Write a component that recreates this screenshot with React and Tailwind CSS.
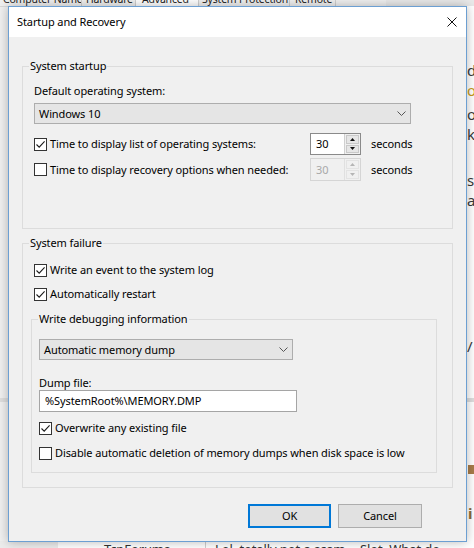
import React from "react";

function Check({ checked }) {
  return (
    <span className="flex h-[13px] w-[13px] shrink-0 items-center justify-center border border-[#333333] bg-white">
      {checked && (
        <svg width="11" height="11" viewBox="0 0 11 11">
          <path d="M1.5 5.5 L4.2 8.2 L9.6 2.4" fill="none" stroke="#1a1a1a" strokeWidth="1.1" />
        </svg>
      )}
    </span>
  );
}

function CheckRow({ checked, children, className = "" }) {
  return (
    <div className={`flex h-[16px] items-center gap-[3px] leading-[16px] ${className}`}>
      <Check checked={checked} />
      <span className="whitespace-nowrap">{children}</span>
    </div>
  );
}

function Chevron() {
  return (
    <svg width="9" height="5" viewBox="0 0 9 5">
      <path d="M0.5 0.5 L4.5 4.5 L8.5 0.5" fill="none" stroke="#555555" strokeWidth="1" />
    </svg>
  );
}

function Combo({ children, className = "" }) {
  return (
    <div className={`flex h-[21px] items-center justify-between border border-[#adadad] bg-[#e5e5e5] pl-[4px] pr-[4px] leading-[16px] ${className}`}>
      <span className="whitespace-nowrap">{children}</span>
      <Chevron />
    </div>
  );
}

function Arrow({ up, disabled }) {
  const c = disabled ? "#b5b5b5" : "#111111";
  return (
    <svg width="5" height="3" viewBox="0 0 5 3">
      {up ? <path d="M0 3 L2.5 0 L5 3 Z" fill={c} /> : <path d="M0 0 L2.5 3 L5 0 Z" fill={c} />}
    </svg>
  );
}

function Spin({ disabled }) {
  return (
    <div
      className={`flex h-full w-[51px] border ${
        disabled ? "border-[#d5d5d5] bg-[#f0f0f0] text-[#a8a8a8]" : "border-[#8a8a8a] bg-white text-black"
      }`}
    >
      <div className="flex flex-1 items-center pl-[5px] leading-[16px]">30</div>
      <div
        className={`flex w-[16px] flex-col gap-[1px] border-l p-[1px] ${
          disabled ? "border-[#e0e0e0] bg-[#f0f0f0]" : "border-[#d0d0d0] bg-[#f0f0f0]"
        }`}
      >
        <div
          className={`flex flex-1 items-center justify-center border ${
            disabled ? "border-[#e3e3e3] bg-[#f0f0f0]" : "border-[#c9c9c9] bg-[#e6e6e6]"
          }`}
        >
          <Arrow up disabled={disabled} />
        </div>
        <div
          className={`flex flex-1 items-center justify-center border ${
            disabled ? "border-[#e3e3e3] bg-[#f0f0f0]" : "border-[#c9c9c9] bg-[#e6e6e6]"
          }`}
        >
          <Arrow disabled={disabled} />
        </div>
      </div>
    </div>
  );
}

export default function App() {
  return (
    <div className="relative h-[548px] w-[474px] overflow-hidden bg-white font-[Noto_Sans,sans-serif] text-[11px] tracking-[-0.1px] text-black">
      {/* window behind: System Properties */}
      <div className="absolute left-0 top-0 h-[541px] w-[386px] bg-[#f0f0f0]">
        <div className="-mt-[9px] flex h-[16px] items-stretch whitespace-nowrap border-b border-[#d9d9d9] text-[10.5px] leading-[16px] tracking-[-0.2px] text-[#222]">
          <div className="w-[82px] overflow-hidden border-r border-[#cfcfcf] pl-[3px]">Computer Name</div>
          <div className="w-[54px] overflow-hidden border-r border-[#cfcfcf] pl-[4px]">Hardware</div>
          <div className="w-[63px] overflow-hidden border-r border-[#cfcfcf] bg-white pl-[6px]">Advanced</div>
          <div className="w-[91px] overflow-hidden border-r border-[#cfcfcf] pl-[3px]">System Protection</div>
          <div className="w-[46px] overflow-hidden border-r border-[#cfcfcf] pl-[5px]">Remote</div>
        </div>
      </div>
      <div className="absolute left-[386px] top-0 h-[6px] w-[88px] bg-[#e9e9e9]" />
      <div className="absolute left-0 top-[398px] h-[4px] w-[474px] bg-[#dedede]" />

      {/* page fragments on the right */}
      <div className="absolute left-[467px] top-[60px] flex flex-col text-[15px] leading-[20px] text-[#3a3a3a]">
        <span>de</span>
        <span className="text-[#c79a1a]">o</span>
        <span className="mt-[4px]">o</span>
        <span>k</span>
        <span className="mt-[26px]">s</span>
        <span>a</span>
      </div>
      <span className="absolute left-[467px] top-[336px] text-[15px] leading-[20px] text-[#3a3a3a]">/</span>
      <div className="absolute left-[468px] top-[465px] h-[9px] w-[6px] bg-[#a87c4a]" />
      <span className="absolute left-[468px] top-[503px] text-[15px] font-bold leading-[20px] text-[#8a6a3a]">i</span>

      {/* bottom strip */}
      <div className="absolute left-0 top-[541px] h-[7px] w-[58px] bg-[#ececec]" />
      <div className="absolute left-[205px] top-[541px] h-[7px] w-[1px] bg-[#cfcfcf]" />
      <span className="absolute left-[104px] top-[541px] whitespace-nowrap text-[13px] leading-[16px] text-[#333]">TcpForums</span>
      <span className="absolute left-[215px] top-[541px] whitespace-nowrap text-[13px] leading-[16px] text-[#333]">Lol, totally not a scam</span>
      <span className="absolute left-[360px] top-[541px] whitespace-nowrap text-[13px] leading-[16px] text-[#333]">Slot. What do</span>

      {/* dialog */}
      <div className="absolute left-[8px] top-[6px] flex h-[536px] w-[459px] flex-col border border-[#6c9fd2] bg-[#f0f0f0] shadow-[0_0_10px_rgba(0,0,0,0.28)]">
        <div className="flex h-[30px] shrink-0 items-center justify-between bg-white pl-[8px] pr-[9px]">
          <span className="leading-[16px]">Startup and Recovery</span>
          <svg width="10" height="10" viewBox="0 0 10 10">
            <path d="M0.5 0.5 L9.5 9.5 M9.5 0.5 L0.5 9.5" stroke="#111" strokeWidth="1" />
          </svg>
        </div>

        <div className="flex flex-1 flex-col px-[13px] pt-[21px]">
          <fieldset className="border border-[#dcdcdc]">
            <legend className="ml-[6px] px-[1px] leading-[16px]">System startup</legend>
            <div className="pb-[47px] pl-[11px]">
              <div className="mt-[9px] leading-[16px]">Default operating system:</div>
              <Combo className="mt-[4px] w-[377px]">Windows 10</Combo>
              <div className="mt-[9px] flex h-[22px] items-center">
                <div className="w-[276px]">
                  <CheckRow checked>Time to display list of operating systems:</CheckRow>
                </div>
                <Spin />
                <span className="ml-[10px] leading-[16px]">seconds</span>
              </div>
              <div className="mt-[3px] flex h-[23px] items-center">
                <div className="w-[276px]">
                  <CheckRow>Time to display recovery options when needed:</CheckRow>
                </div>
                <Spin disabled />
                <span className="ml-[10px] leading-[16px]">seconds</span>
              </div>
            </div>
          </fieldset>

          <fieldset className="mt-[6px] border border-[#dcdcdc]">
            <legend className="ml-[6px] px-[1px] leading-[16px]">System failure</legend>
            <div className="pb-[14px]">
              <CheckRow checked className="ml-[11px] mt-[11px]">
                Write an event to the system log
              </CheckRow>
              <CheckRow checked className="ml-[11px] mt-[8px]">
                Automatically restart
              </CheckRow>
              <fieldset className="ml-[8px] mr-[15px] mt-[9px] border border-[#dcdcdc]">
                <legend className="ml-[6px] px-[1px] leading-[16px]">Write debugging information</legend>
                <div className="pb-[11px] pl-[7px]">
                  <Combo className="mt-[12px] w-[254px]">Automatic memory dump</Combo>
                  <div className="mt-[15px] leading-[15px]">Dump file:</div>
                  <div className="flex h-[22px] w-[258px] items-center border border-[#a5a5a5] bg-white pl-[5px] leading-[16px]">
                    %SystemRoot%\MEMORY.DMP
                  </div>
                  <CheckRow checked className="mt-[8px]">
                    Overwrite any existing file
                  </CheckRow>
                  <CheckRow className="mt-[9px]">
                    Disable automatic deletion of memory dumps when disk space is low
                  </CheckRow>
                </div>
              </fieldset>
            </div>
          </fieldset>

          <div className="mr-[31px] mt-[16px] flex justify-end gap-[7px]">
            <button className="flex h-[24px] w-[83px] items-center justify-center border-2 border-[#0078d7] bg-[#e1e1e1] leading-[16px]">
              OK
            </button>
            <button className="flex h-[24px] w-[84px] items-center justify-center border border-[#adadad] bg-[#e1e1e1] leading-[16px]">
              Cancel
            </button>
          </div>
        </div>
      </div>
    </div>
  );
}
